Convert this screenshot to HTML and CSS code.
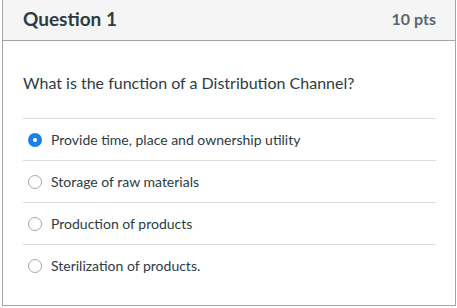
FILE: index.html
```html
<!DOCTYPE html>
<html lang="en">
<head>
  <meta charset="UTF-8" />
  <title>Question 1</title>
  <link rel="stylesheet" href="styles.css">
</head>
<body>

<!-- Quiz question card -->
<div class="question">
  <div class="question-header">
    <h2>Question 1</h2>
    <span class="points">10 pts</span>
  </div>

  <div class="question-body">
    <p class="question-text">What is the function of a Distribution Channel?</p>

    <div class="answers">
      <label class="answer">
        <input type="radio" name="q1" checked />
        <span class="radio"></span>
        Provide time, place and ownership utility
      </label>
      <label class="answer">
        <input type="radio" name="q1" />
        <span class="radio"></span>
        Storage of raw materials
      </label>
      <label class="answer">
        <input type="radio" name="q1" />
        <span class="radio"></span>
        Production of products
      </label>
      <label class="answer">
        <input type="radio" name="q1" />
        <span class="radio"></span>
        Sterilization of products.
      </label>
    </div>
  </div>
</div>

</body>
</html>
```

FILE: styles.css
```css
body {
  font-family: 'Lato', sans-serif;
  color: #2d3b45;
  margin: 0;
  padding: 0;
  background: #fff;
}

.question {
  width: 452px;
  margin: -1px 0 0 2px;
  border: 1px solid #a5a5a5;
  background: #fff;
}

.question-header {
  display: flex;
  justify-content: space-between;
  align-items: center;
  height: 37px;
  padding: 0 19px 3px 20px;
  background: #f5f5f5;
  border-bottom: 1px solid #a5a5a5;
}

.question-header h2 {
  margin: 0;
  font-size: 19px;
  font-weight: 700;
}

.points {
  font-size: 16px;
  font-weight: 700;
  color: #5b6770;
}

.question-body {
  padding: 32px 19px 19px 20px;
}

.question-text {
  margin: 0 0 26px;
  font-size: 16px;
  line-height: 19px;
}

.answer {
  display: flex;
  align-items: center;
  height: 41px;
  border-top: 1px solid #dcdcdc;
  font-size: 14px;
  cursor: pointer;
}

.answer input {
  display: none;
}

.radio {
  box-sizing: border-box;
  width: 14px;
  height: 14px;
  margin: 0 9px 0 5px;
  border: 1px solid #a8a8a8;
  border-radius: 50%;
  background: #fff;
}

.answer input:checked + .radio {
  border: 5px solid #1c7fe6;
  background: #fff;
}
```
